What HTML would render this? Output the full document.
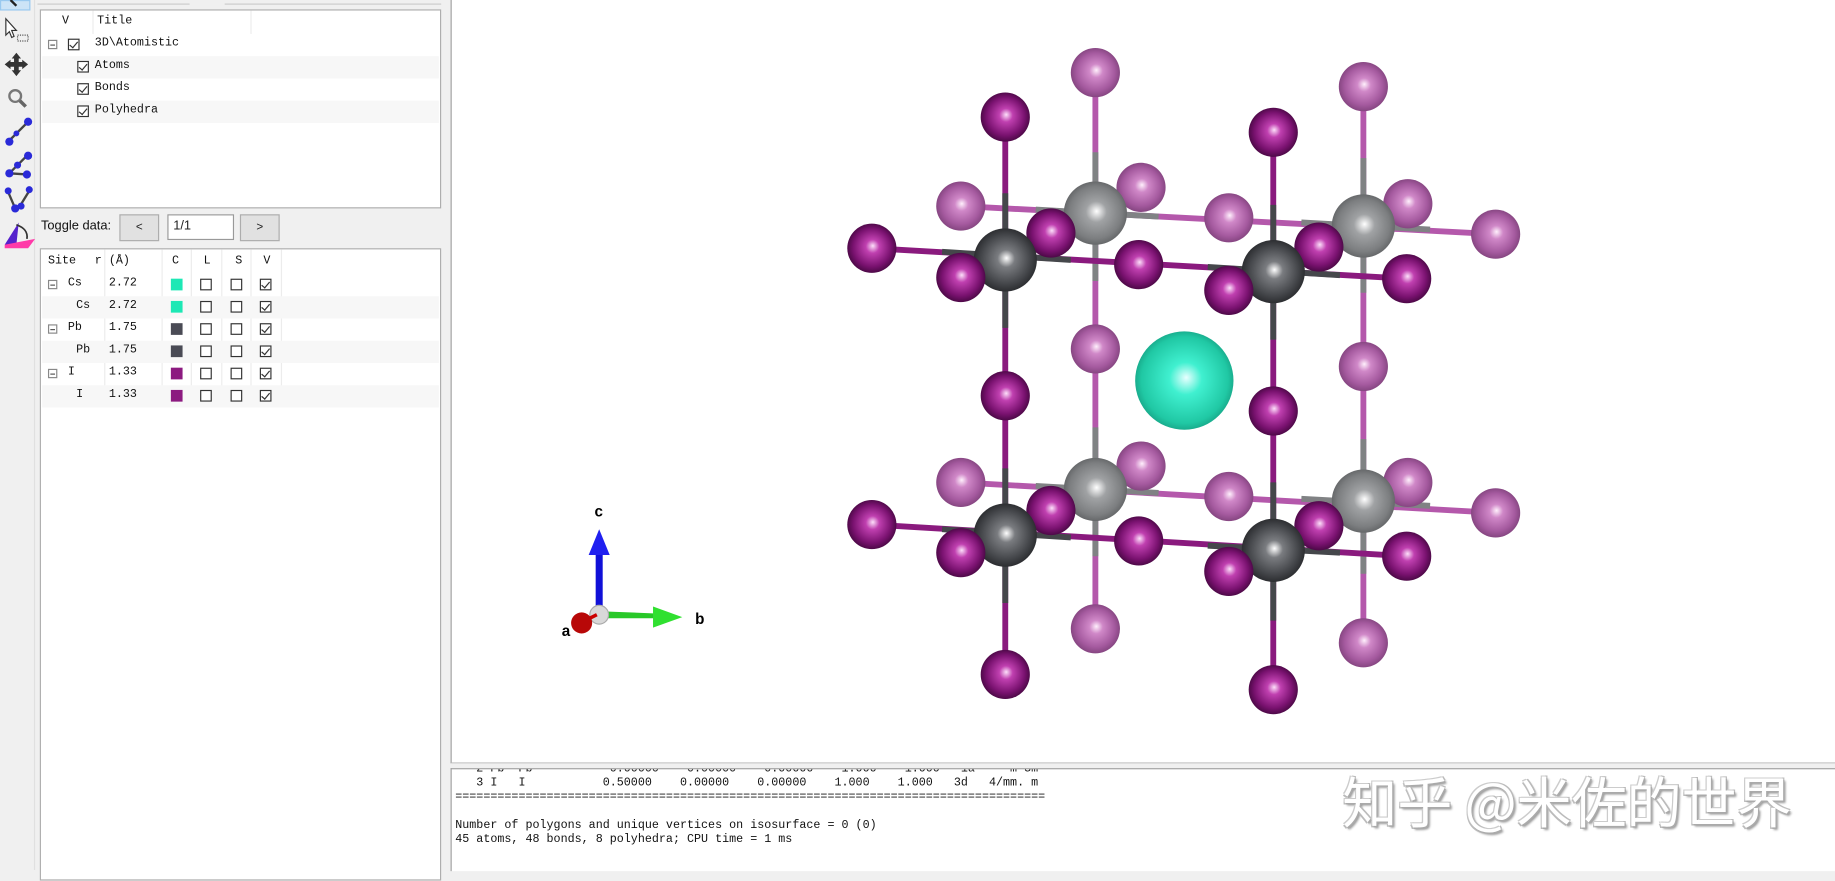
<!DOCTYPE html>
<html><head><meta charset="utf-8"><style>
html,body{margin:0;padding:0;}
body{width:1835px;height:870px;overflow:hidden;background:#f0f0f0;position:relative;font-family:"Liberation Sans",sans-serif;}
#w{position:absolute;left:0;top:0;width:1568px;height:743px;transform:scale(1.17028,1.17093);transform-origin:0 0;}
.abs{position:absolute;}
.panel{position:absolute;background:#fff;border:1px solid #adadad;box-sizing:border-box;}
.mono{font-family:"Liberation Mono","DejaVu Sans Mono",monospace;font-size:10px;color:#111;}
.row{position:absolute;left:1px;right:1px;height:19px;}
.alt{background:#f7f7f7;}
.cb{position:absolute;width:10px;height:10px;border:1px solid #333;background:#fff;box-sizing:border-box;}
.cb.k::after{content:"";position:absolute;left:2px;top:0px;width:3px;height:6px;border-right:1px solid #333;border-bottom:1px solid #333;transform:rotate(40deg);}
.mn{position:absolute;width:8px;height:8px;border:1px solid #888;box-sizing:border-box;background:#fff;}
.mn::after{content:"";position:absolute;left:1px;top:3px;width:4px;height:1px;background:#555;}
.sw{position:absolute;width:10px;height:10px;}
.vl{position:absolute;top:0;width:1px;background:#ececec;}
.btn{position:absolute;background:#e1e1e1;border:1px solid #adadad;box-sizing:border-box;font-size:10px;text-align:center;line-height:22px;color:#222;}
.out{position:absolute;left:389px;font-family:"Liberation Mono",monospace;font-size:10px;white-space:pre;color:#111;line-height:12px;}
</style></head><body><div id="w">

<!-- toolbar -->
<div class="abs" style="left:0;top:0;width:29px;height:743px;background:#f0f0f0;border-right:1px solid #e0e0e0;"></div>
<div class="abs" style="left:0;top:0;width:26px;height:9px;background:#cce4f7;border:1px solid #99c9ef;box-sizing:border-box;"></div>
<svg class="abs" style="left:0;top:0" width="30" height="215" viewBox="0 0 30 215">
 <path d="M9 0 L14 5" stroke="#222" stroke-width="2"/>
 <path d="M5 16 L5 30 L8 27 L10 32 L12 31 L10 26 L14 26 Z" fill="#fff" stroke="#333" stroke-width="1"/>
 <rect x="15" y="30" width="9" height="5" fill="none" stroke="#555" stroke-dasharray="1,1"/>
 <path d="M14 45 L18 50 L16 50 L16 53 L19 53 L19 51 L24 55 L19 59 L19 57 L16 57 L16 60 L18 60 L14 65 L10 60 L12 60 L12 57 L9 57 L9 59 L4 55 L9 51 L9 53 L12 53 L12 50 L10 50 Z" fill="#333"/>
 <circle cx="13" cy="82" r="5" fill="none" stroke="#777" stroke-width="2"/>
 <path d="M17 86 L22 91" stroke="#666" stroke-width="3"/>
 <path d="M8 120 L22 106" stroke="#444" stroke-width="2"/>
 <circle cx="8" cy="121" r="3.5" fill="#2a2ad8"/><circle cx="14" cy="114" r="2.5" fill="#2a2ad8"/><circle cx="24" cy="104" r="3.5" fill="#2a2ad8"/>
 <path d="M8 148 L23 133 M8 148 L23 149" stroke="#444" stroke-width="2"/>
 <circle cx="8" cy="148" r="3.5" fill="#2a2ad8"/><circle cx="15" cy="141" r="3" fill="#2a2ad8"/><circle cx="24" cy="133" r="3.5" fill="#2a2ad8"/><circle cx="23" cy="149" r="3.5" fill="#2a2ad8"/>
 <path d="M7 164 L13 178 L17 176 L25 163" stroke="#444" stroke-width="2" fill="none"/>
 <circle cx="7" cy="163" r="3" fill="#2a2ad8"/><circle cx="13" cy="178" r="3.5" fill="#2a2ad8"/><circle cx="18" cy="176" r="3" fill="#2a2ad8"/><circle cx="25" cy="162" r="3" fill="#2a2ad8"/>
 <path d="M4 209 L16 190 L14 209 Z" fill="#5522cc"/><path d="M4 209 L30 204 L24 212 L4 212 Z" fill="#ff3aa8"/><path d="M14 192 C20 194 24 198 23 204" stroke="#333" fill="none" stroke-width="1.5"/>
</svg>

<!-- top tab line -->
<div class="abs" style="left:32px;top:0;width:130px;height:3px;border-bottom:1px solid #ccc;"></div>
<div class="abs" style="left:192px;top:0;width:185px;height:3px;border-bottom:1px solid #ccc;"></div>

<!-- tree panel -->
<div class="panel mono" style="left:34px;top:8px;width:343px;height:170px;">
 <div class="vl" style="left:44px;height:20px;"></div><div class="vl" style="left:179px;height:20px;"></div>
 <div class="abs" style="left:18px;top:4px;">V</div>
 <div class="abs" style="left:48px;top:4px;">Title</div>
 <div class="row" style="top:20px;"><div class="mn" style="left:5px;top:5px;"></div><div class="cb k" style="left:22px;top:4px;"></div><div class="abs" style="left:45px;top:3px;">3D\Atomistic</div></div>
 <div class="row alt" style="top:39px;"><div class="cb k" style="left:30px;top:4px;"></div><div class="abs" style="left:45px;top:3px;">Atoms</div></div>
 <div class="row" style="top:58px;"><div class="cb k" style="left:30px;top:4px;"></div><div class="abs" style="left:45px;top:3px;">Bonds</div></div>
 <div class="row alt" style="top:77px;"><div class="cb k" style="left:30px;top:4px;"></div><div class="abs" style="left:45px;top:3px;">Polyhedra</div></div>
</div>

<!-- toggle -->
<div class="abs" style="left:35px;top:187px;font-size:11px;color:#111;">Toggle data:</div>
<div class="btn" style="left:102px;top:183px;width:34px;height:23px;">&lt;</div>
<div class="abs" style="left:143px;top:183px;width:57px;height:22px;border:1px solid #999;box-sizing:border-box;background:#fff;font-size:11px;padding:3px 4px;color:#222;">1/1</div>
<div class="btn" style="left:205px;top:183px;width:34px;height:23px;">&gt;</div>

<!-- site table -->
<div class="panel mono" style="left:34px;top:212px;width:343px;height:540px;">
 <div class="vl" style="left:54px;height:135px;"></div><div class="vl" style="left:103px;height:135px;"></div><div class="vl" style="left:128px;height:135px;"></div><div class="vl" style="left:154px;height:135px;"></div><div class="vl" style="left:179px;height:135px;"></div><div class="vl" style="left:205px;height:135px;"></div>
 <div class="abs" style="left:6px;top:5px;">Site</div><div class="abs" style="left:46px;top:5px;">r (Å)</div><div class="abs" style="left:112px;top:5px;">C</div><div class="abs" style="left:139px;top:5px;">L</div><div class="abs" style="left:166px;top:5px;">S</div><div class="abs" style="left:190px;top:5px;">V</div>
 <div class="row" style="top:21px;"><div class="mn" style="left:5px;top:5px;"></div><div class="abs" style="left:22px;top:3px;">Cs</div><div class="abs" style="left:57px;top:3px;">2.72</div><div class="sw" style="left:110px;top:4px;background:#1de8b5;"></div><div class="cb" style="left:135px;top:4px;"></div><div class="cb" style="left:161px;top:4px;"></div><div class="cb k" style="left:186px;top:4px;"></div></div>
 <div class="row alt" style="top:40px;"><div class="abs" style="left:29px;top:3px;">Cs</div><div class="abs" style="left:57px;top:3px;">2.72</div><div class="sw" style="left:110px;top:4px;background:#1de8b5;"></div><div class="cb" style="left:135px;top:4px;"></div><div class="cb" style="left:161px;top:4px;"></div><div class="cb k" style="left:186px;top:4px;"></div></div>
 <div class="row" style="top:59px;"><div class="mn" style="left:5px;top:5px;"></div><div class="abs" style="left:22px;top:3px;">Pb</div><div class="abs" style="left:57px;top:3px;">1.75</div><div class="sw" style="left:110px;top:4px;background:#4a4b55;"></div><div class="cb" style="left:135px;top:4px;"></div><div class="cb" style="left:161px;top:4px;"></div><div class="cb k" style="left:186px;top:4px;"></div></div>
 <div class="row alt" style="top:78px;"><div class="abs" style="left:29px;top:3px;">Pb</div><div class="abs" style="left:57px;top:3px;">1.75</div><div class="sw" style="left:110px;top:4px;background:#4a4b55;"></div><div class="cb" style="left:135px;top:4px;"></div><div class="cb" style="left:161px;top:4px;"></div><div class="cb k" style="left:186px;top:4px;"></div></div>
 <div class="row" style="top:97px;"><div class="mn" style="left:5px;top:5px;"></div><div class="abs" style="left:22px;top:3px;">I</div><div class="abs" style="left:57px;top:3px;">1.33</div><div class="sw" style="left:110px;top:4px;background:#8c1a80;"></div><div class="cb" style="left:135px;top:4px;"></div><div class="cb" style="left:161px;top:4px;"></div><div class="cb k" style="left:186px;top:4px;"></div></div>
 <div class="row alt" style="top:116px;"><div class="abs" style="left:29px;top:3px;">I</div><div class="abs" style="left:57px;top:3px;">1.33</div><div class="sw" style="left:110px;top:4px;background:#8c1a80;"></div><div class="cb" style="left:135px;top:4px;"></div><div class="cb" style="left:161px;top:4px;"></div><div class="cb k" style="left:186px;top:4px;"></div></div>
</div>
<div class="abs" style="left:378px;top:0;width:5px;height:743px;background:#f0f0f0;"></div>

<!-- viewer -->
<div class="abs" style="left:385px;top:0;width:1183px;height:652px;background:#fff;border-left:1px solid #a0a0a0;border-bottom:1px solid #c8c8c8;box-sizing:border-box;"></div>
<div class="abs" style="left:385px;top:656px;width:1183px;height:88px;background:#fff;border-left:1px solid #a0a0a0;border-top:1px solid #a0a0a0;box-sizing:border-box;overflow:hidden;">
 <div class="out" style="left:3px;top:-5px;">   2 Pb  Pb           0.00000    0.00000    0.00000    1.000    1.000   1a     m-3m
   3 I   I           0.50000    0.00000    0.00000    1.000    1.000   3d   4/mm. m
====================================================================================

Number of polygons and unique vertices on isosurface = 0 (0)
45 atoms, 48 bonds, 8 polyhedra; CPU time = 1 ms</div>
</div>
<div class="abs" style="left:1147px;top:648px;font-family:'Noto Sans CJK SC',sans-serif;font-size:47px;color:#fff;text-shadow:1px 1px 0 #aaa,-1px -1px 0 #ccc,1px -1px 0 #bbb,-1px 1px 0 #bbb,2px 2px 2px #999;letter-spacing:0px;white-space:nowrap;">知乎 @米佐的世界</div>

<svg class="abs" style="left:0;top:0" width="1568" height="652" viewBox="0 0 1568 652">
<defs>
 <radialGradient id="gi" cx="0.5" cy="0.5" r="0.55" fx="0.52" fy="0.45"><stop offset="0" stop-color="#fde0fa"/><stop offset="0.25" stop-color="#c040b0"/><stop offset="0.7" stop-color="#7a1270"/><stop offset="1" stop-color="#3c0538"/></radialGradient>
 <radialGradient id="gl" cx="0.5" cy="0.5" r="0.55" fx="0.52" fy="0.45"><stop offset="0" stop-color="#fff0fc"/><stop offset="0.25" stop-color="#d088c8"/><stop offset="0.7" stop-color="#a55a9f"/><stop offset="1" stop-color="#7a3e76"/></radialGradient>
 <radialGradient id="gp" cx="0.5" cy="0.5" r="0.55" fx="0.52" fy="0.47"><stop offset="0" stop-color="#ffffff"/><stop offset="0.25" stop-color="#7a7c80"/><stop offset="0.7" stop-color="#45474b"/><stop offset="1" stop-color="#222326"/></radialGradient>
 <radialGradient id="gq" cx="0.5" cy="0.5" r="0.55" fx="0.52" fy="0.47"><stop offset="0" stop-color="#ffffff"/><stop offset="0.3" stop-color="#a0a2a4"/><stop offset="0.75" stop-color="#7c7e80"/><stop offset="1" stop-color="#5a5c5e"/></radialGradient>
 <radialGradient id="gc" cx="0.5" cy="0.5" r="0.55" fx="0.52" fy="0.47"><stop offset="0" stop-color="#e8ffff"/><stop offset="0.3" stop-color="#40f0d0"/><stop offset="0.8" stop-color="#20c8a4"/><stop offset="1" stop-color="#14987c"/></radialGradient>
</defs>
<g stroke-width="5" stroke="#b458ab">
 <path d="M936 62 V537 M1165 74 V549 M821 176 L1278 200 M821 412 L1278 438 M975 160 L936 182 M1203 174 L1165 193 M975 398 L936 418 M1203 412 L1165 428"/>
</g>
<g stroke-width="5" stroke="#808284">
 <path d="M936 130 V240 M936 365 V475 M1165 135 V250 M1165 375 V490 M885 179 L990 185 M1112 190 L1222 196 M885 415 L990 421 M1112 426 L1222 432 M975 160 L936 182 M1203 174 L1165 193 M975 398 L936 418 M1203 412 L1165 428"/>
</g>
<g fill="url(#gl)">
 <circle cx="936" cy="62" r="21"/><circle cx="1165" cy="74" r="21"/><circle cx="936" cy="537" r="21"/><circle cx="1165" cy="549" r="21"/>
 <circle cx="936" cy="298" r="21"/><circle cx="1165" cy="313" r="21"/>
 <circle cx="821" cy="176" r="21"/><circle cx="821" cy="412" r="21"/><circle cx="1278" cy="200" r="21"/><circle cx="1278" cy="438" r="21"/>
 <circle cx="1050" cy="186" r="21"/><circle cx="1050" cy="424" r="21"/>
 <circle cx="975" cy="160" r="21"/><circle cx="1203" cy="174" r="21"/><circle cx="975" cy="398" r="21"/><circle cx="1203" cy="412" r="21"/>
</g>
<g fill="url(#gq)">
 <circle cx="936" cy="182" r="27"/><circle cx="1165" cy="193" r="27"/><circle cx="936" cy="418" r="27"/><circle cx="1165" cy="428" r="27"/>
</g>
<circle cx="1012" cy="325" r="42" fill="url(#gc)"/>
<g stroke-width="5" stroke="#8a1a7e">
 <path d="M859 100 V576 M1088 113 V589 M745 212 L1202 238 M745 448 L1202 475 M859 222 L898 199 M1088 232 L1127 211 M859 457 L898 436 M1088 470 L1127 449"/>
</g>
<g stroke-width="5" stroke="#45474b">
 <path d="M859 165 V280 M859 400 V515 M1088 175 V290 M1088 412 V530 M805 215 L915 222 M1032 228 L1145 235 M805 452 L915 459 M1032 466 L1145 472 M859 222 L898 199 M1088 232 L1127 211 M859 457 L898 436 M1088 470 L1127 449"/>
</g>
<g fill="url(#gi)">
 <circle cx="898" cy="199" r="21"/><circle cx="1127" cy="211" r="21"/><circle cx="898" cy="436" r="21"/><circle cx="1127" cy="449" r="21"/>
</g>
<g fill="url(#gp)">
 <circle cx="859" cy="222" r="27"/><circle cx="1088" cy="232" r="27"/><circle cx="859" cy="457" r="27"/><circle cx="1088" cy="470" r="27"/>
</g>
<g fill="url(#gi)">
 <circle cx="859" cy="100" r="21"/><circle cx="1088" cy="113" r="21"/><circle cx="859" cy="576" r="21"/><circle cx="1088" cy="589" r="21"/>
 <circle cx="859" cy="338" r="21"/><circle cx="1088" cy="351" r="21"/>
 <circle cx="745" cy="212" r="21"/><circle cx="745" cy="448" r="21"/><circle cx="1202" cy="238" r="21"/><circle cx="1202" cy="475" r="21"/>
 <circle cx="973" cy="226" r="21"/><circle cx="973" cy="462" r="21"/>
 <circle cx="821" cy="237" r="21"/><circle cx="1050" cy="248" r="21"/><circle cx="821" cy="472" r="21"/><circle cx="1050" cy="488" r="21"/>
</g>
<rect x="509" y="470" width="6" height="52" fill="#1010d8"/>
<path d="M503 474 L512 452 L521 474 Z" fill="#2020f0"/>
<path d="M512 522 L563 524 L563 528 L512 528 Z" fill="#28c828"/>
<path d="M558 518 L583 527 L558 536 Z" fill="#30e030"/>
<circle cx="512" cy="525" r="8" fill="#d8d8d8" stroke="#aaa"/>
<path d="M500 530 L510 525" stroke="#c00" stroke-width="3"/>
<circle cx="497" cy="532" r="9" fill="#b80808"/>
<text x="508" y="441" font-family="Liberation Sans" font-weight="bold" font-size="13">c</text>
<text x="594" y="533" font-family="Liberation Sans" font-weight="bold" font-size="13">b</text>
<text x="480" y="543" font-family="Liberation Sans" font-weight="bold" font-size="13">a</text>
</svg>
</div></body></html>
